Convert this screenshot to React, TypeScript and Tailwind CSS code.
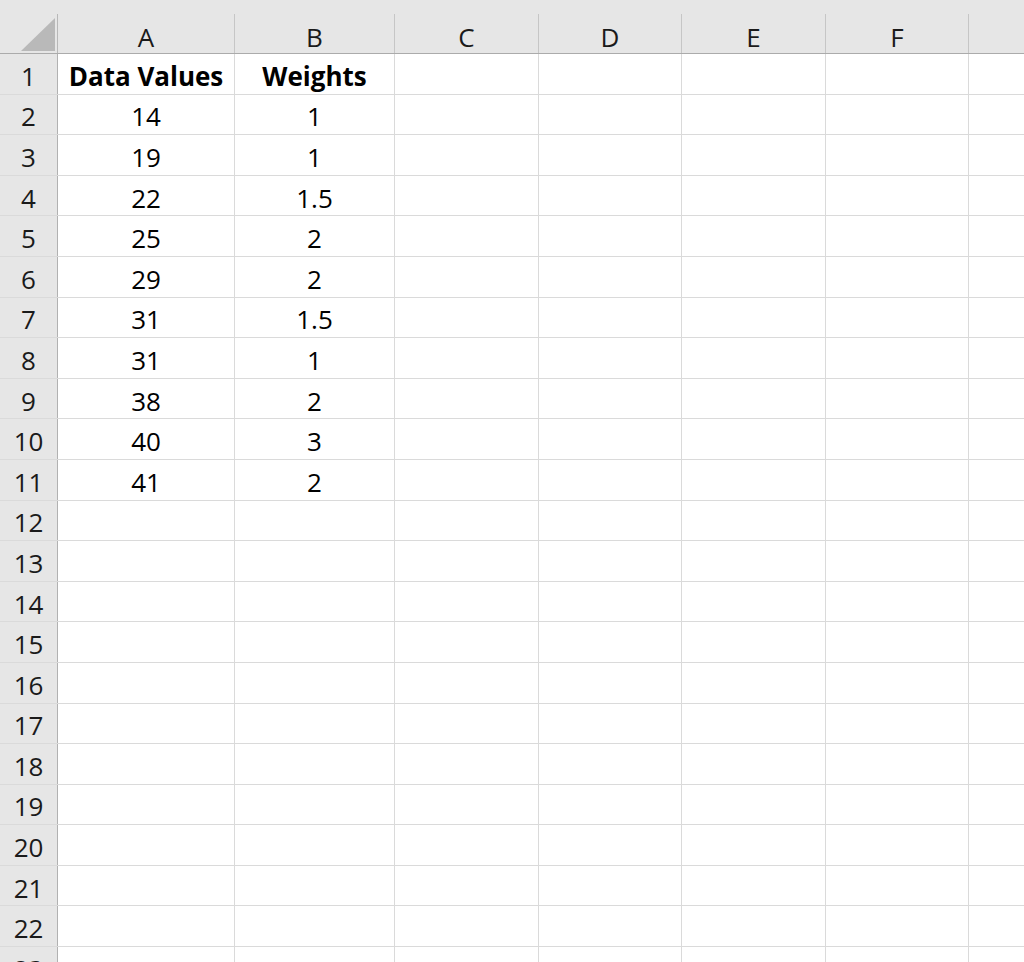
import React from 'react';

const COLS = [
  { key: 'A', w: 'w-[177px]' },
  { key: 'B', w: 'w-[160px]' },
  { key: 'C', w: 'w-[144px]' },
  { key: 'D', w: 'w-[143px]' },
  { key: 'E', w: 'w-[144px]' },
  { key: 'F', w: 'w-[143px]' },
];

const DATA: [string, string][] = [
  ['14', '1'],
  ['19', '1'],
  ['22', '1.5'],
  ['25', '2'],
  ['29', '2'],
  ['31', '1.5'],
  ['31', '1'],
  ['38', '2'],
  ['40', '3'],
  ['41', '2'],
];

function Cell({ w, bold, children }: { w: string; bold?: boolean; children?: React.ReactNode }) {
  return (
    <div
      className={`${w} shrink-0 h-full flex items-center justify-center pt-[4px] border-r border-[#dadada] ${
        bold ? 'font-bold' : ''
      }`}
    >
      {children}
    </div>
  );
}

function Row({ n, a, b, bold }: { n: number; a?: string; b?: string; bold?: boolean }) {
  return (
    <div className="flex h-[40.6px] border-b border-[#dadada] bg-white">
      <div className="w-[58px] shrink-0 h-full flex items-center justify-center pt-[4px] bg-[#e6e6e6] border-r border-[#b1b1b1] text-[#1a1a1a]">
        {n}
      </div>
      <Cell w={COLS[0].w} bold={bold}>{a}</Cell>
      <Cell w={COLS[1].w} bold={bold}>{b}</Cell>
      {COLS.slice(2).map(c => (
        <Cell key={c.key} w={c.w} />
      ))}
      <div className="flex-1" />
    </div>
  );
}

export default function App() {
  const rows = Array.from({ length: 23 }, (_, i) => i + 1);
  return (
    <div
      className="w-[1024px] h-[962px] overflow-hidden bg-white text-black text-[26px] leading-none"
      style={{ fontFamily: '"Open Sans", "Liberation Sans", sans-serif' }}
    >
      {/* column headers */}
      <div className="flex items-end h-[54px] bg-[#e6e6e6] border-b border-[#ababab]">
        <div className="w-[58px] shrink-0 h-[39px] border-r border-[#b8b8b8] flex items-end justify-end pr-[2px] pb-[2px]">
          <svg width="34" height="33" viewBox="0 0 34 33">
            <polygon points="34,0 34,33 0,33" fill="#b9b9b9" />
          </svg>
        </div>
        {COLS.map(c => (
          <div
            key={c.key}
            className={`${c.w} shrink-0 h-[39px] border-r border-[#c6c6c6] flex items-center justify-center text-[#1a1a1a] pt-[6px]`}
          >
            {c.key}
          </div>
        ))}
        <div className="flex-1" />
      </div>

      {/* sheet body */}
      {rows.map(n => {
        if (n === 1) return <Row key={n} n={n} a="Data Values" b="Weights" bold />;
        const d = DATA[n - 2];
        return <Row key={n} n={n} a={d?.[0]} b={d?.[1]} />;
      })}
    </div>
  );
}
